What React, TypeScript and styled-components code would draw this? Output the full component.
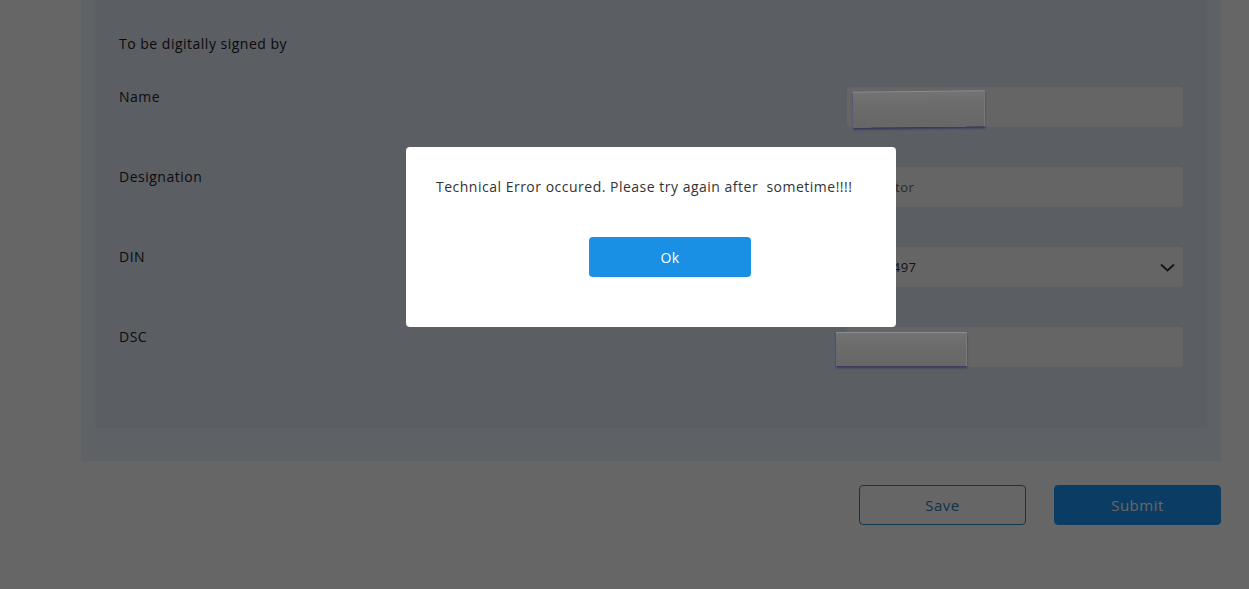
import React from "react";
import styled, { createGlobalStyle } from "styled-components";

const Global = createGlobalStyle`
  html, body { margin: 0; padding: 0; background: #ffffff; }
  body {
    font-family: "Open Sans", "Noto Sans", sans-serif;
    letter-spacing: 0.5px;
    width: 1249px;
    height: 589px;
    overflow: hidden;
  }
`;

const Page = styled.div`
  padding-left: 81px;
  width: 1140px;
`;

const OuterPanel = styled.div`
  background: #ebf5ff;
  padding: 0 14px 33px;
`;

const InnerPanel = styled.div`
  background: #e4ebf7;
  padding: 34px 24px 61px;
`;

const Heading = styled.div`
  font-size: 14px;
  font-weight: 500;
  color: #1a1a1a;
  line-height: 20px;
  margin-bottom: 33px;
`;

const Rows = styled.div`
  display: grid;
  grid-template-columns: 1fr 336px;
  row-gap: 40px;
`;

const Label = styled.div`
  font-size: 14px;
  color: #222;
  line-height: 20px;
`;

const Field = styled.div<{ $dark?: boolean }>`
  height: 40px;
  background: #fdfdfd;
  border-radius: 4px;
  display: flex;
  align-items: center;
  justify-content: space-between;
  padding: 0 8px 0 14px;
  font-size: 13px;
  color: ${(p) => (p.$dark ? "#333" : "#666")};
`;

const Actions = styled.div`
  display: flex;
  justify-content: flex-end;
  gap: 28px;
  margin-top: 24px;
`;

const ActionButton = styled.button<{ $primary?: boolean }>`
  width: 167px;
  height: 40px;
  border-radius: 4px;
  font-family: inherit;
  letter-spacing: 0.5px;
  font-size: 15px;
  border: 1px solid ${(p) => (p.$primary ? "#1997fa" : "#2f86c9")};
  background: ${(p) => (p.$primary ? "#1997fa" : "#ffffff")};
  color: ${(p) => (p.$primary ? "#ffffff" : "#2f7ec4")};
`;

const Backdrop = styled.div`
  position: fixed;
  inset: 0;
  background: rgba(0, 0, 0, 0.6);
`;

const Modal = styled.div`
  position: fixed;
  left: 406px;
  top: 147px;
  width: 490px;
  height: 180px;
  box-sizing: border-box;
  background: #ffffff;
  border-radius: 4px;
  padding: 30px 30px 0;
`;

const Message = styled.div`
  font-size: 14px;
  color: #333;
  line-height: 20px;
  white-space: pre;
`;

const OkButton = styled.button`
  display: block;
  margin: 40px 0 0 153px;
  width: 162px;
  height: 40px;
  border: none;
  border-radius: 4px;
  background: #1a90e4;
  color: #ffffff;
  font-family: inherit;
  letter-spacing: 0.5px;
  font-size: 14px;
`;

const Redaction = styled.div<{ $skew?: boolean }>`
  position: fixed;
  background: linear-gradient(180deg, #737373 0%, #6b6b6b 40%, #676767 100%);
  border-top: 1px solid #8a8c94;
  border-right: 1px solid #7a7a7a;
  box-shadow: 0 2px 2px rgba(30, 30, 50, 0.6), -1px 2px 2px rgba(90, 100, 200, 0.35);
  transform: ${(p) => (p.$skew ? "rotate(-0.6deg)" : "none")};
`;

const Chevron = () => (
  <svg width="15" height="9" viewBox="0 0 15 9" fill="none">
    <path d="M1 1.5 L7.5 7.5 L14 1.5" stroke="#333" strokeWidth="1.8" />
  </svg>
);

export default function App() {
  return (
    <>
      <Global />
      <Page>
        <OuterPanel>
          <InnerPanel>
            <Heading>To be digitally signed by</Heading>
            <Rows>
              <Label>Name</Label>
              <Field />
              <Label>Designation</Label>
              <Field>Director</Field>
              <Label>DIN</Label>
              <Field $dark>
                <span>0853497</span>
                <Chevron />
              </Field>
              <Label>DSC</Label>
              <Field />
            </Rows>
          </InnerPanel>
        </OuterPanel>
        <Actions>
          <ActionButton>Save</ActionButton>
          <ActionButton $primary>Submit</ActionButton>
        </Actions>
      </Page>
      <Backdrop />
      <Modal>
        <Message>Technical Error occured. Please try again after  sometime!!!!</Message>
        <OkButton>Ok</OkButton>
      </Modal>
      <Redaction $skew style={{ left: 853, top: 91, width: 131, height: 35 }} />
      <Redaction style={{ left: 836, top: 332, width: 130, height: 33 }} />
    </>
  );
}
